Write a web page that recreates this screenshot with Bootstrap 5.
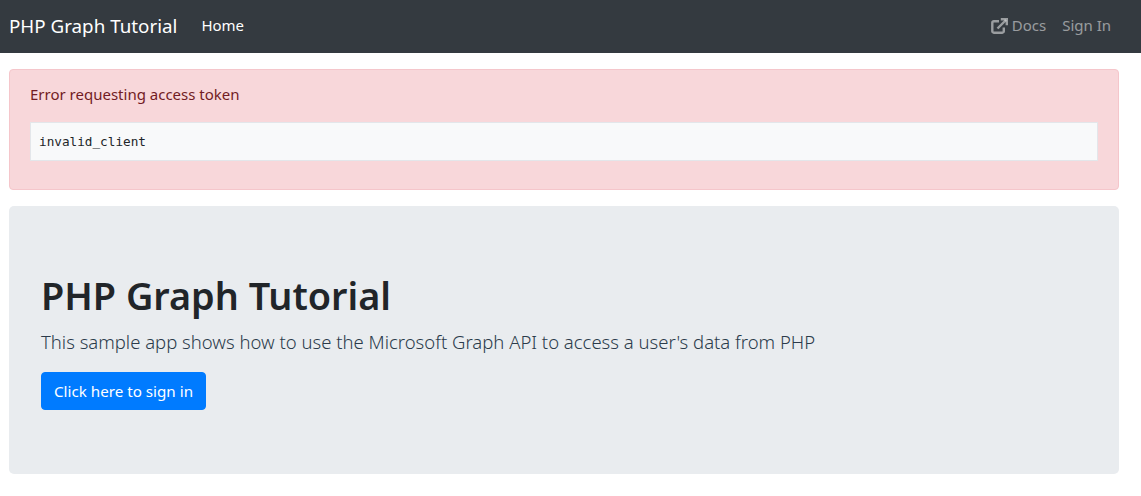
<!DOCTYPE html>
<html lang="en">
<head>
    <meta charset="UTF-8">
    <title>PHP Graph Tutorial</title>
    <link href="https://cdn.jsdelivr.net/npm/bootstrap@5.3.3/dist/css/bootstrap.min.css" rel="stylesheet">
    <style>
        body { font-family: "Noto Sans", "Open Sans", sans-serif; font-size: 15px; color: #212529; }
        .top-bar { background: #343a40; height: 53px; padding: 0 22px 0 9px; }
        .top-bar .navbar-brand { font-size: 18.8px; color: #fff; padding: 0; margin-right: 16px; }
        .top-bar .nav-link { font-size: 15px; padding: 0 8px 2px; color: rgba(255, 255, 255, .5); }
        .top-bar .nav-link.active { color: #fff; }
        .page-wrap { padding: 16px 22px 0 9px; }
        .error-box { background: #f8d7da; border: 1px solid #f5c6cb; color: #721c24; border-radius: 4px; padding: 14px 20px 28px; margin-bottom: 16px; height: 121px; }
        .error-box p { margin-bottom: 18px; line-height: 20px; }
        .error-box pre { background: #f8f9fa; border: 1px solid #e3e6ea; color: #212529; font-family: "DejaVu Sans Mono", monospace; font-size: 12.7px; padding: 9px 8px; margin: 0; height: 39px; line-height: 19px; overflow: hidden; }
        .hero { background: #e9ecef; border-radius: 5px; padding: 60px 32px 0; height: 268px; }
        .hero h1 { font-size: 37.8px; font-weight: 600; line-height: 60px; margin-bottom: 0; }
        .hero .lead { font-size: 18.5px; font-weight: 300; line-height: 30px; margin-top: 1px; margin-bottom: 15px; color: #2b3b4b; }
        .hero .btn { background: #007bff; border-color: #007bff; font-size: 15.2px; padding: 0 12px; height: 38px; line-height: 36px; border-radius: 4px; width: 165px; }
    </style>
</head>
<body>

<nav class="navbar top-bar">
    <div class="d-flex align-items-center w-100">
        <a class="navbar-brand" href="#">PHP Graph Tutorial</a>
        <a class="nav-link active" href="#">Home</a>
        <div class="d-flex align-items-center ms-auto">
            <a class="nav-link d-flex align-items-center gap-1" href="#">
                <svg width="17" height="16" viewBox="0 0 17 16" fill="none" stroke="currentColor" stroke-width="2.400">
                    <path d="M8 3.200H2.800A1.500 1.500 0 0 0 1.300 4.700V13.200A1.500 1.500 0 0 0 2.800 14.700h8.500A1.500 1.500 0 0 0 12.800 13.200V9.500"/>
                    <path d="M6.500 10.500 15 2"/>
                    <path d="M9.800 1.300h6v5.900" />
                </svg>
                Docs
            </a>
            <a class="nav-link" href="#">Sign In</a>
        </div>
    </div>
</nav>

<div class="page-wrap">
    <div class="error-box" role="alert">
        <p>Error requesting access token</p>
        <pre>invalid_client</pre>
    </div>

    <div class="hero">
        <h1>PHP Graph Tutorial</h1>
        <p class="lead">This sample app shows how to use the Microsoft Graph API to access a user's data from PHP</p>
        <a class="btn btn-primary" href="#">Click here to sign in</a>
    </div>
</div>

</body>
</html>
